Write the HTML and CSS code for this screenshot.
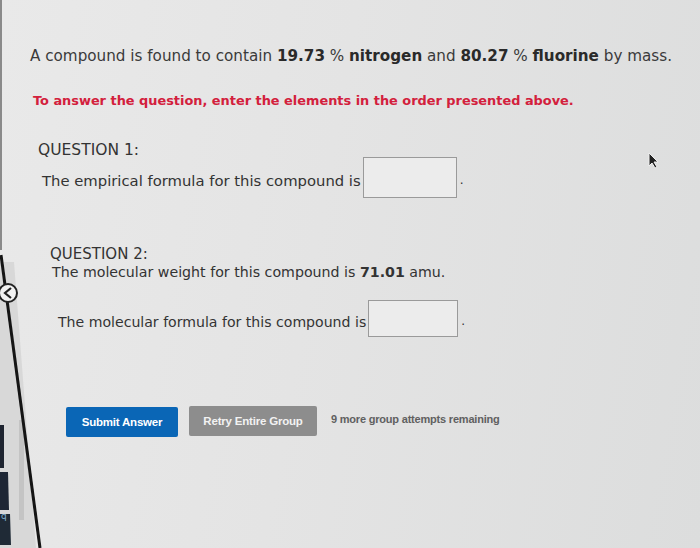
FILE: index.html
```html
<!DOCTYPE html>
<html>
<head>
<meta charset="utf-8">
<link rel="stylesheet" href="styles.css">
</head>
<body>
<div class="page">
  <div class="content">
    <p class="intro">A compound is found to contain <b>19.73</b> % <b>nitrogen</b> and <b>80.27</b> % <b>fluorine</b> by mass.</p>
    <p class="note">To answer the question, enter the elements in the order presented above.</p>
    <div class="q1">
      <div class="qtitle">QUESTION 1:</div>
      <div class="row row1">
        <span class="lbl">The empirical formula for this compound is</span>
        <span class="box box1"></span>
        <span class="dot">.</span>
      </div>
    </div>
    <div class="q2">
      <div class="qtitle">QUESTION 2:</div>
      <div class="mw">The molecular weight for this compound is <b>71.01</b> amu.</div>
      <div class="row row2">
        <span class="lbl">The molecular formula for this compound is</span>
        <span class="box box2"></span>
        <span class="dot">.</span>
      </div>
    </div>
    <div class="actions">
      <span class="btn submit">Submit Answer</span>
      <span class="btn retry">Retry Entire Group</span>
      <span class="remain">9 more group attempts remaining</span>
    </div>
  </div>
  <svg class="edge" width="60" height="548" viewBox="0 0 60 548">
    <rect x="0" y="0" width="2" height="250" fill="#8a8a8a"/>
    <polygon points="0,262 14,262 36,548 0,548" fill="#d8d8d8"/>
    <rect x="19" y="420" width="5" height="100" fill="#c4c4c4"/>
    <polygon points="0,425 4,425 4,468 0,468" fill="#1e2430"/>
    <polygon points="0,472 8,472 9,510 0,510" fill="#1e2635"/>
    <polygon points="0,514 10,514 11,545 0,545" fill="#1f2a36"/>
    <text x="1" y="519" font-family="DejaVu Sans, sans-serif" font-size="9" fill="#7fb0d0">q</text>
    <line x1="1" y1="255" x2="40" y2="548" stroke="#151515" stroke-width="3"/>
    <circle cx="8" cy="293" r="9" fill="#f2f2f2" stroke="#222" stroke-width="2"/>
    <polyline points="11,288 5,293 11,298" fill="none" stroke="#222" stroke-width="2.2"/>
  </svg>
  <svg class="cursor" width="14" height="18" viewBox="0 0 14 18">
    <polygon points="3,1 3,14 6,11 9,16 11,15 8,10 12,10" fill="#222" stroke="#eee" stroke-width="1"/>
  </svg>
</div>
</body>
</html>
```
FILE: styles.css
```css
html, body {
  margin: 0;
  padding: 0;
}
body {
  width: 700px;
  height: 548px;
  overflow: hidden;
}
.page {
  position: relative;
  width: 700px;
  height: 548px;
  background: linear-gradient(100deg, #e9e9e9 0%, #e4e4e4 45%, #dcdddd 100%);
  font-family: "DejaVu Sans", Verdana, sans-serif;
  color: #333;
  overflow: hidden;
}
.content {
  padding: 46px 0 0 30px;
}
.intro {
  margin: 0;
  font-size: 15.2px;
  line-height: 20px;
  color: #3a3a3a;
}
.intro b {
  color: #2a2a2a;
}
.note {
  margin: 26px 0 0 3px;
  font-size: 12.9px;
  line-height: 18px;
  font-weight: bold;
  color: #d3203c;
}
.q1 {
  margin: 30px 0 0 8px;
}
.qtitle {
  font-size: 15.5px;
  line-height: 20px;
  color: #333;
}
.row {
  display: flex;
  align-items: center;
  color: #333;
}
.lbl {
  padding-top: 6px;
}
.row1 {
  margin: -3px 0 0 4px;
  font-size: 14.8px;
}
.box {
  display: inline-block;
  background: #ececec;
  border: 1px solid #9a9a9a;
  box-sizing: border-box;
}
.box1 {
  width: 94px;
  height: 41px;
  margin-left: 2px;
}
.box2 {
  width: 90px;
  height: 37px;
  margin-left: 2px;
}
.dot {
  margin-left: 3px;
  padding-top: 4px;
  font-size: 12px;
}
.q2 {
  margin: 47px 0 0 20px;
}
.q2 .qtitle {
  font-size: 15px;
  line-height: 18px;
}
.mw {
  font-size: 14.2px;
  line-height: 18px;
  margin-left: 2px;
  color: #333;
}
.row2 {
  margin: 19px 0 0 8px;
  font-size: 14.1px;
}
.actions {
  display: flex;
  align-items: center;
  gap: 11px;
  margin: 67px 0 0 36px;
  font-family: "Liberation Sans", Arial, sans-serif;
}
.btn {
  display: inline-flex;
  align-items: center;
  justify-content: center;
  height: 30px;
  border-radius: 2px;
  font-size: 11.5px;
  font-weight: bold;
  color: #fff;
  letter-spacing: -0.2px;
}
.submit {
  width: 112px;
  background: #0a66b6;
  margin-top: 3px;
}
.retry {
  width: 128px;
  background: #8d8d8d;
  color: #f2f2f2;
}
.remain {
  margin-left: 3px;
  font-size: 11px;
  font-weight: bold;
  color: #606060;
  letter-spacing: -0.2px;
  margin-top: -4px;
}
.edge {
  position: absolute;
  left: 0;
  top: 0;
}
.cursor {
  position: absolute;
  left: 646px;
  top: 152px;
}
```
